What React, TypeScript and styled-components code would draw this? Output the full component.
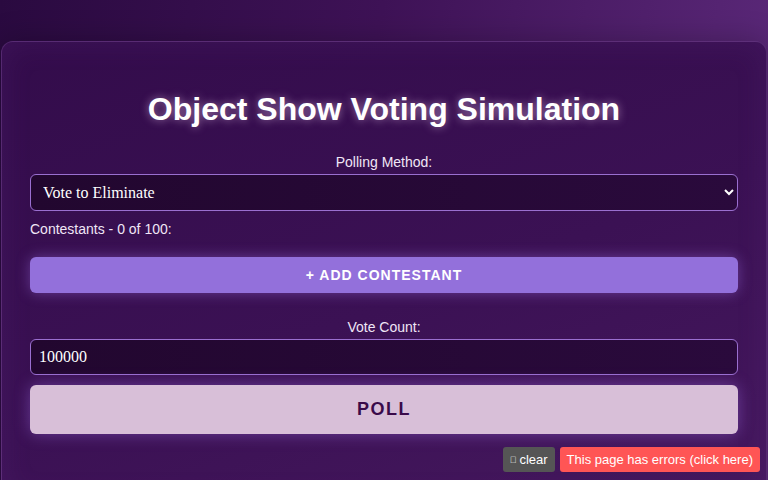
import React from "react";
import styled, { createGlobalStyle } from "styled-components";

const Global = createGlobalStyle`
  html, body { margin: 0; padding: 0; }
  body {
    width: 768px;
    height: 480px;
    overflow: hidden;
    font-family: "Liberation Sans", Arial, sans-serif;
    color: #ffffff;
    background: linear-gradient(100deg, #2a0a40 0%, #3e1256 45%, #5e2b7d 100%);
  }
`;

const Page = styled.div`
  padding: 41px 1px 0 1px;
`;

const Card = styled.main`
  box-sizing: border-box;
  width: 766px;
  min-height: 460px;
  padding: 30px 28px 20px;
  border: 1px solid rgba(180, 130, 220, 0.22);
  border-radius: 12px;
  background: linear-gradient(160deg, #330c4b 0%, #3b1154 55%, #45185e 100%);
  box-shadow: 0 0 30px rgba(0, 0, 0, 0.25), inset 0 0 30px rgba(120, 60, 170, 0.15);
  display: flex;
  flex-direction: column;
`;

const Title = styled.h1`
  margin: 19px 0 26px;
  text-align: center;
  font-size: 32px;
  line-height: 37px;
  font-weight: 700;
  color: #ffffff;
  text-shadow: 0 0 8px rgba(255, 220, 255, 0.5);
`;

const Label = styled.label<{ $align?: string; $gap?: number }>`
  display: block;
  font-size: 14px;
  line-height: 16px;
  color: #f0e6f6;
  text-align: ${(p) => p.$align ?? "center"};
  margin-bottom: ${(p) => p.$gap ?? 4}px;
`;

const Select = styled.select`
  box-sizing: border-box;
  width: 100%;
  height: 37px;
  padding: 0 8px;
  font-family: "Liberation Serif", "Times New Roman", serif;
  font-size: 16px;
  color: #ffffff;
  background: linear-gradient(90deg, #22072f, #2a0a3c);
  border: 1px solid #9a6fd0;
  border-radius: 6px;
  margin-bottom: 10px;
  outline: none;
`;

const Input = styled.input`
  box-sizing: border-box;
  width: 100%;
  height: 36px;
  padding: 0 8px;
  font-family: "Liberation Serif", "Times New Roman", serif;
  font-size: 16px;
  color: #ffffff;
  background: linear-gradient(90deg, #22072f, #2a0a3c);
  border: 1px solid #9a6fd0;
  border-radius: 6px;
  margin-bottom: 10px;
  outline: none;
`;

const AddButton = styled.button`
  box-sizing: border-box;
  width: 100%;
  height: 36px;
  margin: 20px 0 26px;
  border: none;
  border-radius: 6px;
  background: #9370db;
  color: #ffffff;
  font-family: "Liberation Sans", Arial, sans-serif;
  font-size: 14px;
  font-weight: 700;
  letter-spacing: 1px;
  box-shadow: 0 0 14px rgba(160, 110, 230, 0.45);
`;

const PollButton = styled.button`
  box-sizing: border-box;
  width: 100%;
  height: 49px;
  border: none;
  border-radius: 6px;
  background: #d8bfd8;
  color: #3a0a4a;
  font-family: "Liberation Sans", Arial, sans-serif;
  font-size: 18px;
  font-weight: 700;
  letter-spacing: 1.5px;
  box-shadow: 0 0 16px rgba(160, 110, 230, 0.45);
`;

const ErrorBar = styled.div`
  position: fixed;
  right: 8px;
  bottom: 8px;
  display: flex;
  gap: 5px;
`;

const ErrBtn = styled.button<{ $bg: string }>`
  height: 25px;
  padding: 0 7px;
  border: none;
  border-radius: 3px;
  background: ${(p) => p.$bg};
  color: #ffffff;
  font-family: "Liberation Sans", Arial, sans-serif;
  font-size: 13px;
  line-height: 25px;
`;

const Glyph = styled.span`
  font-size: 9px;
  margin-right: 3px;
  vertical-align: 1px;
`;

export default function App() {
  return (
    <>
      <Global />
      <Page>
        <Card>
          <Title>Object Show Voting Simulation</Title>
          <Label>Polling Method:</Label>
          <Select defaultValue="eliminate">
            <option value="eliminate">Vote to Eliminate</option>
            <option value="save">Vote to Save</option>
          </Select>
          <Label $align="left" $gap={0}>Contestants - 0 of 100:</Label>
          <AddButton>+ ADD CONTESTANT</AddButton>
          <Label>Vote Count:</Label>
          <Input defaultValue="100000" />
          <PollButton>POLL</PollButton>
        </Card>
      </Page>
      <ErrorBar>
        <ErrBtn $bg="#555555"><Glyph>{"\uf1f8"}</Glyph>clear</ErrBtn>
        <ErrBtn $bg="#ff5555">This page has errors (click here)</ErrBtn>
      </ErrorBar>
    </>
  );
}
